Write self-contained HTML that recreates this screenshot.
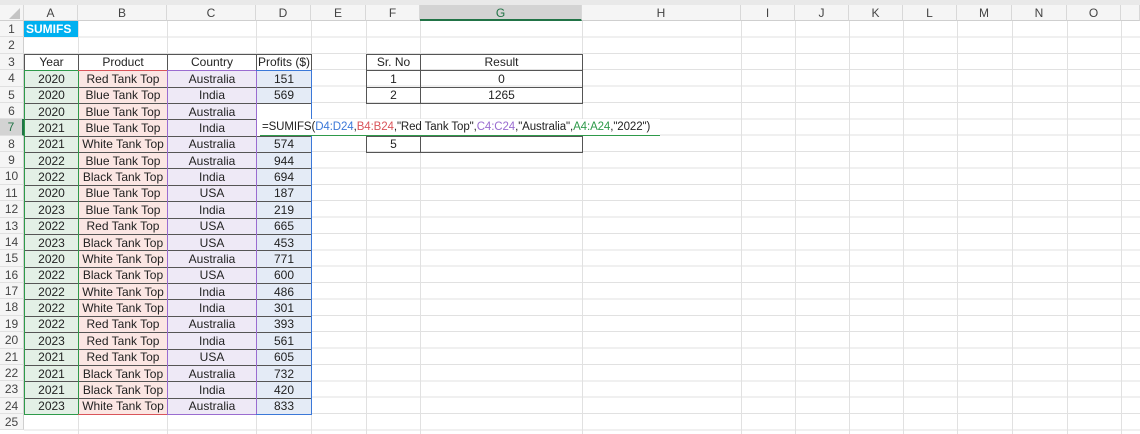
<!DOCTYPE html>
<html><head><meta charset="utf-8"><style>
*{margin:0;padding:0;box-sizing:border-box}
body{width:1140px;height:434px;overflow:hidden;background:#fff;font-family:"Liberation Sans",sans-serif;font-size:12px;color:#222;position:relative}
.grid{position:absolute;left:24px;top:21px;width:1116px;height:413px;background:repeating-linear-gradient(to bottom,transparent 0 15.38px,#e1e1e1 15.38px 16.38px)}
.v{position:absolute;top:21px;height:413px;width:1px;background:#e1e1e1}
.top{position:absolute;left:0;top:0;width:1140px;height:5px;background:#e9e9e9}
.ch{position:absolute;top:5px;height:16px;background:#f5f5f5;border-right:1px solid #d8d8d8;border-bottom:1px solid #cfcfcf;text-align:center;line-height:16px;color:#444;font-size:12px}
.rh{position:absolute;left:0;width:24px;height:16.38px;background:#f5f5f5;border-right:1px solid #cfcfcf;border-bottom:1px solid #e0e0e0;text-align:center;line-height:16px;color:#444;font-size:12px}
table{position:absolute;border-collapse:collapse;table-layout:fixed}
td{height:16.38px;border:1px solid #555;text-align:center;padding:0;line-height:14px;font-size:12px;white-space:nowrap;overflow:hidden}
#dt td:nth-child(1){background:#e3f0e6}
#dt td:nth-child(2){background:#fbe6e3}
#dt td:nth-child(3){background:#eee9f6}
#dt td:nth-child(4){background:#e4ebf6}
#dt tr:first-child td{background:#fff}
#dt td.w{background:#fff;border-top:none;border-bottom:none;border-right:none}
.ob{position:absolute;border:1.2px solid}
</style></head><body>
<div class="grid"></div>
<div class="v" style="left:78px"></div><div class="v" style="left:167px"></div><div class="v" style="left:256px"></div><div class="v" style="left:311px"></div><div class="v" style="left:366px"></div><div class="v" style="left:420px"></div><div class="v" style="left:582px"></div><div class="v" style="left:741px"></div><div class="v" style="left:795px"></div><div class="v" style="left:849px"></div><div class="v" style="left:903px"></div><div class="v" style="left:957px"></div><div class="v" style="left:1012px"></div><div class="v" style="left:1067px"></div><div class="v" style="left:1121px"></div>
<div class="top"></div>
<div class="ch" style="left:0;width:24px"><svg width="24" height="16"><polygon points="20,3 20,14 9,14" fill="#c4c4c4"/></svg></div>
<div class="ch" style="left:24px;width:54px">A</div>
<div class="ch" style="left:78px;width:89px">B</div>
<div class="ch" style="left:167px;width:89px">C</div>
<div class="ch" style="left:256px;width:55px">D</div>
<div class="ch" style="left:311px;width:55px">E</div>
<div class="ch" style="left:366px;width:54px">F</div>
<div class="ch" style="left:420px;width:162px;background:#d3d3d3;color:#217346;border-bottom:2px solid #217346">G</div>
<div class="ch" style="left:582px;width:159px">H</div>
<div class="ch" style="left:741px;width:54px">I</div>
<div class="ch" style="left:795px;width:54px">J</div>
<div class="ch" style="left:849px;width:54px">K</div>
<div class="ch" style="left:903px;width:54px">L</div>
<div class="ch" style="left:957px;width:55px">M</div>
<div class="ch" style="left:1012px;width:55px">N</div>
<div class="ch" style="left:1067px;width:54px">O</div>
<div class="ch" style="left:1121px;width:19px"></div>

<div class="rh" style="top:21px">1</div><div class="rh" style="top:37.38px">2</div><div class="rh" style="top:53.76px">3</div><div class="rh" style="top:70.14px">4</div><div class="rh" style="top:86.52px">5</div><div class="rh" style="top:102.9px">6</div><div class="rh" style="top:119.28px;background:#d3d3d3;color:#217346;border-right:2px solid #217346">7</div><div class="rh" style="top:135.66px">8</div><div class="rh" style="top:152.04px">9</div><div class="rh" style="top:168.42px">10</div><div class="rh" style="top:184.8px">11</div><div class="rh" style="top:201.18px">12</div><div class="rh" style="top:217.56px">13</div><div class="rh" style="top:233.94px">14</div><div class="rh" style="top:250.32px">15</div><div class="rh" style="top:266.7px">16</div><div class="rh" style="top:283.08px">17</div><div class="rh" style="top:299.46px">18</div><div class="rh" style="top:315.84px">19</div><div class="rh" style="top:332.22px">20</div><div class="rh" style="top:348.6px">21</div><div class="rh" style="top:364.98px">22</div><div class="rh" style="top:381.36px">23</div><div class="rh" style="top:397.74px">24</div><div class="rh" style="top:414.12px">25</div>

<div style="position:absolute;left:24px;top:21px;width:54px;height:16.38px;background:#00b0f0;color:#fff;font-weight:bold;line-height:16px;padding-left:2px">SUMIFS</div>

<table id="dt" style="left:24px;top:53.76px;width:287px">
<colgroup><col style="width:54px"><col style="width:89px"><col style="width:89px"><col style="width:55px"></colgroup>
<tr><td>Year</td><td>Product</td><td>Country</td><td>Profits ($)</td></tr>
<tr><td>2020</td><td>Red Tank Top</td><td>Australia</td><td>151</td></tr>
<tr><td>2020</td><td>Blue Tank Top</td><td>India</td><td>569</td></tr>
<tr><td>2020</td><td>Blue Tank Top</td><td>Australia</td><td class="w"></td></tr>
<tr><td>2021</td><td>Blue Tank Top</td><td>India</td><td class="w"></td></tr>
<tr><td>2021</td><td>White Tank Top</td><td>Australia</td><td>574</td></tr>
<tr><td>2022</td><td>Blue Tank Top</td><td>Australia</td><td>944</td></tr>
<tr><td>2022</td><td>Black Tank Top</td><td>India</td><td>694</td></tr>
<tr><td>2020</td><td>Blue Tank Top</td><td>USA</td><td>187</td></tr>
<tr><td>2023</td><td>Blue Tank Top</td><td>India</td><td>219</td></tr>
<tr><td>2022</td><td>Red Tank Top</td><td>USA</td><td>665</td></tr>
<tr><td>2023</td><td>Black Tank Top</td><td>USA</td><td>453</td></tr>
<tr><td>2020</td><td>White Tank Top</td><td>Australia</td><td>771</td></tr>
<tr><td>2022</td><td>Black Tank Top</td><td>USA</td><td>600</td></tr>
<tr><td>2022</td><td>White Tank Top</td><td>India</td><td>486</td></tr>
<tr><td>2022</td><td>White Tank Top</td><td>India</td><td>301</td></tr>
<tr><td>2022</td><td>Red Tank Top</td><td>Australia</td><td>393</td></tr>
<tr><td>2023</td><td>Red Tank Top</td><td>India</td><td>561</td></tr>
<tr><td>2021</td><td>Red Tank Top</td><td>USA</td><td>605</td></tr>
<tr><td>2021</td><td>Black Tank Top</td><td>Australia</td><td>732</td></tr>
<tr><td>2021</td><td>Black Tank Top</td><td>India</td><td>420</td></tr>
<tr><td>2023</td><td>White Tank Top</td><td>Australia</td><td>833</td></tr>
</table>
<div class="ob" style="left:24px;top:69.5px;width:55px;height:345px;border-color:#2e9a4a"></div>
<div class="ob" style="left:78px;top:69.5px;width:90px;height:345px;border-color:#d9545a;border-left:none"></div>
<div class="ob" style="left:167px;top:69.5px;width:90px;height:345px;border-color:#9a6cd0"></div>
<div class="ob" style="left:256px;top:69.5px;width:56px;height:345px;border-color:#3b78d8;border-left:none"></div>

<table style="left:366px;top:53.76px;width:216px">
<colgroup><col style="width:54px"><col style="width:162px"></colgroup>
<tr><td>Sr. No</td><td>Result</td></tr>
<tr><td>1</td><td>0</td></tr>
<tr><td>2</td><td>1265</td></tr>
</table>
<table style="left:366px;top:135.66px;width:216px">
<colgroup><col style="width:54px"><col style="width:162px"></colgroup>
<tr><td>5</td><td></td></tr>
</table>
<div style="position:absolute;left:260px;top:119.28px;height:16.38px;padding:0 2px;background:#fff;line-height:17px;white-space:nowrap;font-size:11.5px;letter-spacing:-0.1px;border-bottom:1px solid #2e9a4a;width:400px">=SUMIFS(<span style="color:#3b78d8">D4:D24</span>,<span style="color:#d9545a">B4:B24</span>,"Red Tank Top",<span style="color:#9a6cd0">C4:C24</span>,"Australia",<span style="color:#2e9a4a">A4:A24</span>,"2022")</div>
</body></html>
